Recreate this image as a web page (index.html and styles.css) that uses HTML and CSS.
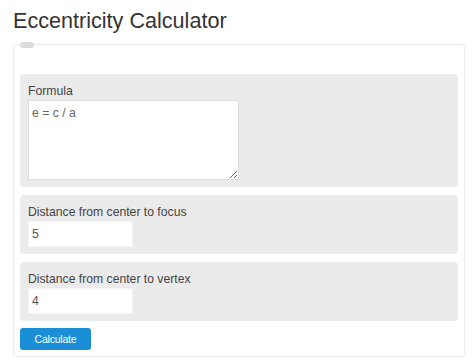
FILE: index.html
```html
<!DOCTYPE html>
<html>
<head>
<meta charset="utf-8">
<link rel="stylesheet" href="styles.css">
</head>
<body>
<h1 class="title">Eccentricity Calculator</h1>
<div class="card">
  <span class="tab"></span>
  <div class="section">
    <label class="label">Formula</label>
    <textarea class="formula">e = c / a</textarea>
  </div>
  <div class="section">
    <label class="label">Distance from center to focus</label>
    <input class="field" type="text" value="5">
  </div>
  <div class="section">
    <label class="label">Distance from center to vertex</label>
    <input class="field" type="text" value="4">
  </div>
  <button class="calc">Calculate</button>
</div>
</body>
</html>
```

FILE: styles.css
```css
html, body {
  margin: 0;
  padding: 0;
  background: #ffffff;
  font-family: "Liberation Sans", Arial, sans-serif;
}
.title {
  margin: 8px 0 0 13px;
  font-size: 21.6px;
  line-height: 25px;
  font-weight: normal;
  color: #333333;
}
.card {
  position: relative;
  box-sizing: border-box;
  margin: 11px 0 0 13px;
  width: 452px;
  height: 313px;
  border: 1px solid #ececec;
  border-radius: 4px;
  box-shadow: 0 0 2px rgba(0, 0, 0, 0.06);
  padding: 29px 6px 6px 6px;
  display: flex;
  flex-direction: column;
  align-items: flex-start;
  gap: 8px;
}
.tab {
  position: absolute;
  left: 6px;
  top: -3px;
  width: 14px;
  height: 6px;
  border-radius: 3px;
  background: #dcdcdc;
}
.section {
  box-sizing: border-box;
  align-self: stretch;
  background: #ebebeb;
  border-radius: 4px;
  padding: 10px 8px 7px 8px;
  display: flex;
  flex-direction: column;
  align-items: flex-start;
}
.label {
  display: block;
  font-size: 12.2px;
  line-height: 14px;
  color: #444444;
  margin-bottom: 2px;
}
.formula {
  box-sizing: border-box;
  width: 211px;
  height: 80px;
  margin: 0;
  border: 1px solid #dddddd;
  background: #ffffff;
  padding: 5px 3px;
  font-family: "Liberation Sans", Arial, sans-serif;
  font-size: 12.2px;
  line-height: 14px;
  color: #666666;
  resize: vertical;
  outline: none;
}
.field {
  box-sizing: border-box;
  width: 105px;
  height: 26px;
  margin: 0;
  border: 1px solid #f4f4f4;
  background: #ffffff;
  padding: 0 3px;
  font-family: "Liberation Sans", Arial, sans-serif;
  font-size: 12.2px;
  color: #555555;
  outline: none;
}
.calc {
  margin-top: -1px;
  width: 71px;
  height: 22px;
  border: none;
  border-radius: 3px;
  background: #1a8fd8;
  color: #ffffff;
  font-family: "Liberation Sans", Arial, sans-serif;
  font-size: 10.5px;
  letter-spacing: -0.2px;
  padding: 0;
}
```
